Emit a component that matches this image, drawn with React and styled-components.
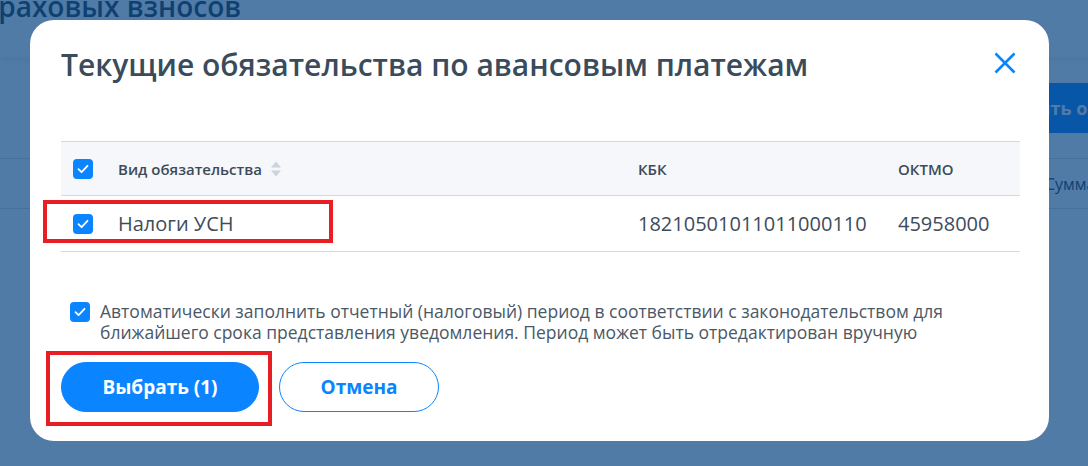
import React from "react";
import styled, { createGlobalStyle } from "styled-components";

const GlobalStyle = createGlobalStyle`
  html, body {
    margin: 0;
    padding: 0;
  }
  body {
    width: 1088px;
    height: 466px;
    overflow: hidden;
    background: #ffffff;
    font-family: "Open Sans", "Liberation Sans", sans-serif;
  }
  * {
    box-sizing: border-box;
  }
`;

// page behind the dialog
const Page = styled.div`
  width: 1255px;
  display: flex;
  flex-direction: column;
`;

const PageHeader = styled.header`
  height: 57px;
  overflow: hidden;
  box-shadow: 0 3px 8px rgba(0, 0, 0, 0.08);
`;

const PageTitle = styled.h1`
  margin: -13px 0 0 -30px;
  font-size: 28px;
  line-height: 38px;
  font-weight: 600;
  color: #2b3a4a;
  white-space: nowrap;
`;

const Toolbar = styled.div`
  height: 101px;
  display: flex;
  justify-content: flex-end;
  align-items: center;
`;

const AddButton = styled.button`
  height: 50px;
  padding: 0 40px;
  border: none;
  border-radius: 25px;
  background: #0a84ff;
  color: #ffffff;
  font-family: inherit;
  font-size: 18px;
  font-weight: 700;
  white-space: nowrap;
`;

const PageTableHead = styled.div`
  height: 51px;
  display: grid;
  grid-template-columns: 1045px 1fr;
  align-items: center;
  border-top: 1px solid #d3dae3;
  border-bottom: 1px solid #d3dae3;
  font-size: 16px;
  color: #2b3a4a;
  white-space: nowrap;
`;

// dialog
const Overlay = styled.div`
  position: fixed;
  inset: 0;
  background: rgba(6, 67, 129, 0.7);
  display: flex;
  align-items: flex-start;
  padding: 20px 0 0 30px;
`;

const Modal = styled.div`
  width: 1019px;
  background: #ffffff;
  border-radius: 24px;
  padding: 25px 29px 29px 31px;
  display: flex;
  flex-direction: column;
  color: #3b4b5a;
`;

const ModalHeader = styled.div`
  display: flex;
  justify-content: space-between;
  align-items: flex-start;
`;

const ModalTitle = styled.h2`
  margin: 0;
  font-size: 30px;
  line-height: 40px;
  font-weight: 600;
  color: #3a4b5b;
`;

const CloseButton = styled.button`
  width: 22px;
  height: 22px;
  margin: 7px 4px 0 0;
  padding: 0;
  border: none;
  background: none;
  display: flex;
`;

const Table = styled.div`
  margin-top: 56px;
  display: flex;
  flex-direction: column;
`;

const Row = styled.div`
  position: relative;
  display: grid;
  grid-template-columns: 57px 520px 260px 1fr;
  align-items: center;
  min-height: ${(p) => (p.$head ? "55px" : "56px")};
  background: ${(p) => (p.$head ? "#f5f7fa" : "#ffffff")};
  border-top: ${(p) => (p.$head ? "1px solid #d3dae3" : "none")};
  border-bottom: 1px solid #d3dae3;
`;

const CheckCell = styled.div`
  padding-left: 12px;
  display: flex;
`;

const HeadCell = styled.div`
  display: flex;
  align-items: center;
  gap: 9px;
  font-size: 15px;
  line-height: 22px;
  font-weight: 600;
  color: #3d4b59;
`;

const Cell = styled.div`
  font-size: 20px;
  line-height: 28px;
  color: #3d4c5b;
`;

const Box = styled.span`
  width: 20px;
  height: 20px;
  border-radius: 4px;
  background: #0a84ff;
  display: flex;
  align-items: center;
  justify-content: center;
  flex-shrink: 0;
`;

const Mark = styled.div`
  position: absolute;
  border: 4px solid #e81e25;
  pointer-events: none;
`;

const AutoFill = styled.label`
  margin: 49px 0 0 9px;
  display: flex;
  align-items: flex-start;
  gap: 10px;
  font-size: 17.5px;
  line-height: 21px;
  color: #4a5866;
  & > span:first-child {
    margin-top: 1px;
  }
`;

const Actions = styled.div`
  position: relative;
  margin-top: 19px;
  display: flex;
  gap: 20px;
`;

const Button = styled.button`
  height: 50px;
  padding: 0 38px;
  min-width: ${(p) => (p.$primary ? "198px" : "160px")};
  border-radius: 25px;
  border: 1px solid #0a84ff;
  background: ${(p) => (p.$primary ? "#0a84ff" : "#ffffff")};
  color: ${(p) => (p.$primary ? "#ffffff" : "#0a84ff")};
  font-family: inherit;
  font-size: 19px;
  font-weight: 700;
`;

const Check = () => (
  <Box>
    <svg width="12" height="10" viewBox="0 0 12 10">
      <path d="M1.5 5.2 4.6 8.2 10.5 1.8" fill="none" stroke="#fff" strokeWidth="1.8" strokeLinecap="round" strokeLinejoin="round" />
    </svg>
  </Box>
);

const SortIcon = () => (
  <svg width="10" height="16" viewBox="0 0 10 16">
    <path d="M0 6.5 5 0.5 10 6.5Z" fill="#ccd3dc" />
    <path d="M0 9.5 5 15.5 10 9.5Z" fill="#ccd3dc" />
  </svg>
);

const App = () => {
  return (
    <>
      <GlobalStyle />
      <Page>
        <PageHeader>
          <PageTitle>страховых взносов</PageTitle>
        </PageHeader>
        <Toolbar>
          <AddButton>Добавить обязательство</AddButton>
        </Toolbar>
        <PageTableHead>
          <span />
          <span>Сумма</span>
        </PageTableHead>
      </Page>

      <Overlay>
        <Modal>
          <ModalHeader>
            <ModalTitle>Текущие обязательства по авансовым платежам</ModalTitle>
            <CloseButton>
              <svg width="22" height="22" viewBox="0 0 22 22">
                <path d="M1.5 1.5 20.5 20.5M20.5 1.5 1.5 20.5" stroke="#0a84ff" strokeWidth="2.6" fill="none" />
              </svg>
            </CloseButton>
          </ModalHeader>

          <Table>
            <Row $head>
              <CheckCell><Check /></CheckCell>
              <HeadCell>Вид обязательства <SortIcon /></HeadCell>
              <HeadCell>КБК</HeadCell>
              <HeadCell>ОКТМО</HeadCell>
            </Row>
            <Row>
              <CheckCell><Check /></CheckCell>
              <Cell>Налоги УСН</Cell>
              <Cell>18210501011011000110</Cell>
              <Cell>45958000</Cell>
              <Mark style={{ left: -18, top: 4, width: 290, height: 43 }} />
            </Row>
          </Table>

          <AutoFill>
            <Check />
            <span>
              Автоматически заполнить отчетный (налоговый) период в соответствии с законодательством для
              ближайшего срока представления уведомления. Период может быть отредактирован вручную
            </span>
          </AutoFill>

          <Actions>
            <Button $primary>Выбрать (1)</Button>
            <Button>Отмена</Button>
            <Mark style={{ left: -15, top: -11, width: 226, height: 75 }} />
          </Actions>
        </Modal>
      </Overlay>
    </>
  );
};

export default App;
